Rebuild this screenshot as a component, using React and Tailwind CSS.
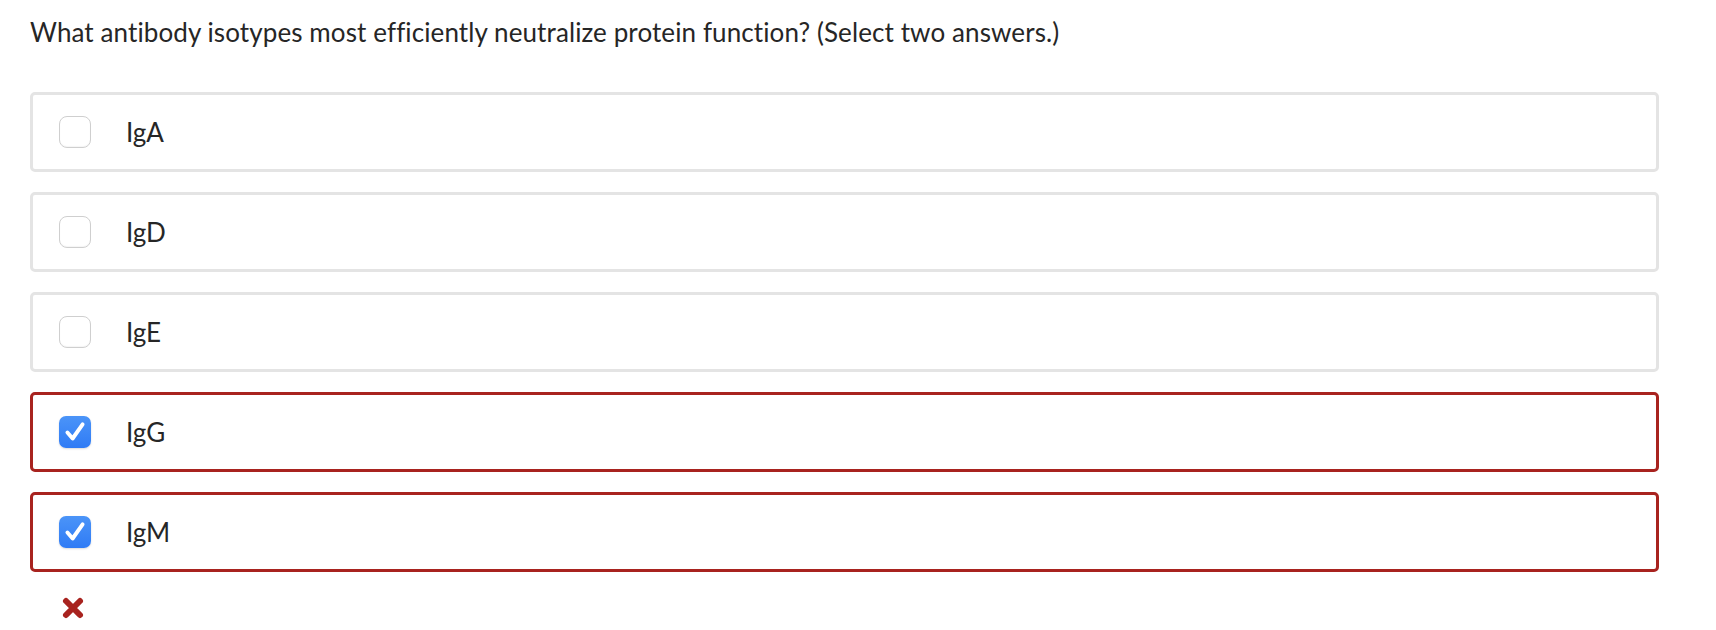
import React from 'react';

const options = [
  { label: 'IgA', checked: false },
  { label: 'IgD', checked: false },
  { label: 'IgE', checked: false },
  { label: 'IgG', checked: true },
  { label: 'IgM', checked: true },
];

function Checkbox({ checked }) {
  if (checked) {
    return (
      <span className="flex h-8 w-8 shrink-0 items-center justify-center rounded-[7px] bg-gradient-to-b from-[#4b94f8] to-[#2f7bf5] shadow-[0_1px_2px_rgba(0,0,0,0.15)]">
        <svg viewBox="0 0 24 24" className="h-[26px] w-[26px]" fill="none" stroke="#fff" strokeWidth="3.6" strokeLinecap="round" strokeLinejoin="round">
          <path d="M5 12.5l4.8 5.5L19 5" />
        </svg>
      </span>
    );
  }
  return (
    <span className="block h-8 w-8 shrink-0 rounded-[8px] border border-[#cfcfcf] bg-white shadow-[inset_0_-1px_1px_rgba(0,0,0,0.04)]" />
  );
}

export default function App() {
  return (
    <div className="min-h-[630px] bg-white pl-[30px] pt-[14px] text-[#262626]" style={{ fontFamily: 'Lato, "Open Sans", sans-serif' }}>
      <p className="text-[26px] leading-[36px] tracking-[0.1px]">
        What antibody isotypes most efficiently neutralize protein function? (Select two answers.)
      </p>
      <div className="mt-[42px] flex w-[1629px] flex-col gap-5">
        {options.map((o) => (
          <div
            key={o.label}
            className={`flex h-20 items-center rounded-[5px] border-[3px] pl-[26px] ${o.checked ? 'border-[#a8231f]' : 'border-[#e4e4e4]'}`}
          >
            <Checkbox checked={o.checked} />
            <span className="ml-[35px] text-[26px] leading-none">{o.label}</span>
          </div>
        ))}
      </div>
      <div className="mt-[24px] pl-[31px] text-[#a8231f]">
        <svg viewBox="0 0 24 24" className="h-[24px] w-[24px]" fill="none" stroke="currentColor" strokeWidth="6" strokeLinecap="round">
          <path d="M5 5l14 14M19 5L5 19" />
        </svg>
      </div>
    </div>
  );
}
